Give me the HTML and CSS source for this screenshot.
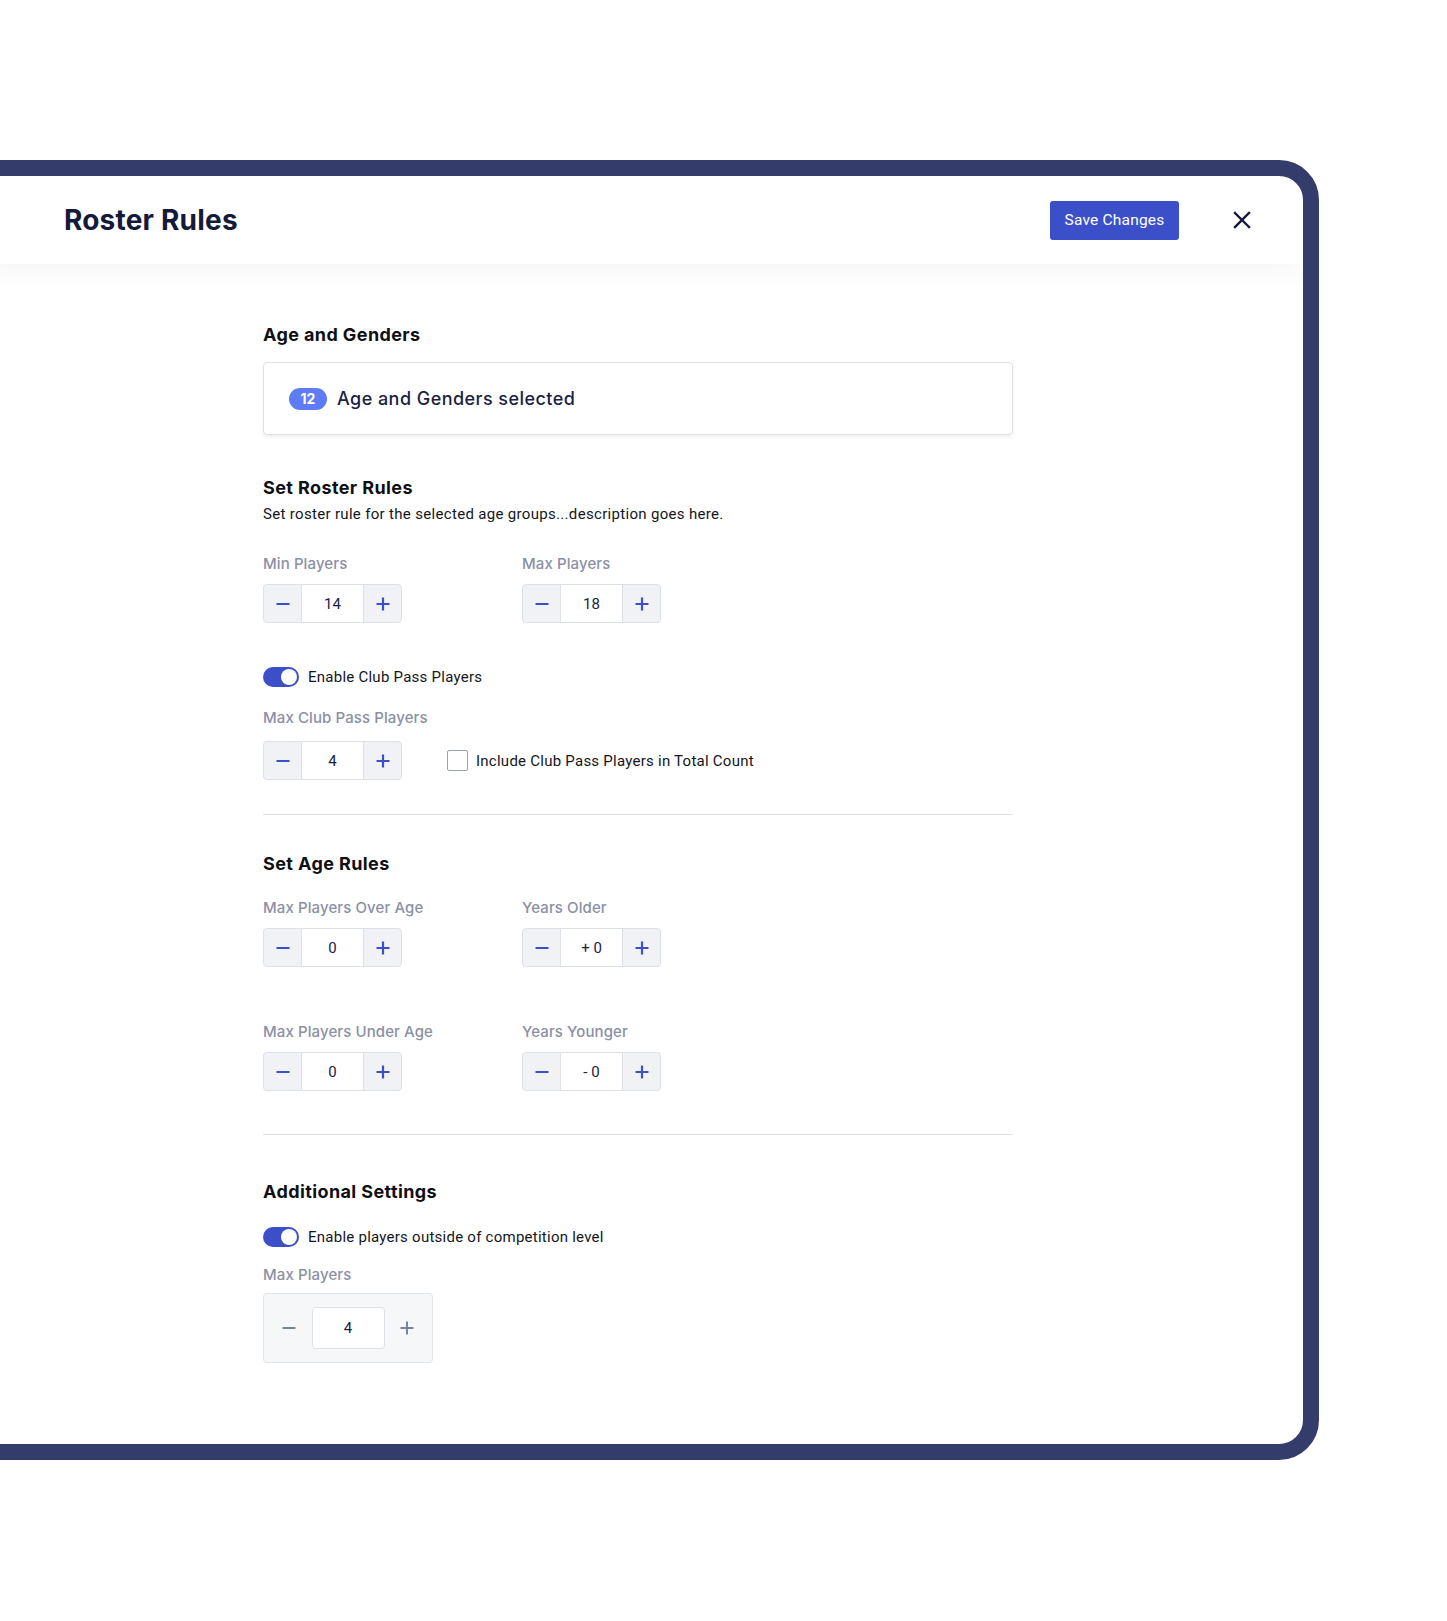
FILE: index.html
```html
<!DOCTYPE html>
<html>
<head>
  <meta name="viewport" content="width=device-width, initial-scale=1">
  <title>Roster Rules</title>
  <link rel="stylesheet" href="styles.css">
</head>
<body>
  <div class="frame">
    <header class="modal-head">
      <h1>Roster Rules</h1>
      <div class="head-actions">
        <button class="btn-save">Save Changes</button>
        <button class="btn-close" aria-label="Close">
          <svg width="18" height="18" viewBox="0 0 18 18"><path d="M2 2L16 16M16 2L2 16" stroke="#141a3a" stroke-width="2.4" stroke-linecap="square"/></svg>
        </button>
      </div>
    </header>

    <main class="modal-body">
      <h2>Age and Genders</h2>
      <div class="selected-box"><span class="badge">12</span><span>Age and Genders selected</span></div>

      <h2 class="sec-roster">Set Roster Rules</h2>
      <p class="desc">Set roster rule for the selected age groups...description goes here.</p>

      <div class="field-row row-minmax">
        <div class="field">
          <span class="field-label">Min Players</span>
          <div class="stepper">
            <span class="step"><svg width="14" height="14" viewBox="0 0 14 14"><path d="M0.5 7H13.5" stroke="#3b50c8" stroke-width="2.2"/></svg></span>
            <span class="value">14</span>
            <span class="step"><svg width="14" height="14" viewBox="0 0 14 14"><path d="M0.5 7H13.5M7 0.5V13.5" stroke="#3b50c8" stroke-width="2.2"/></svg></span>
          </div>
        </div>
        <div class="field">
          <span class="field-label">Max Players</span>
          <div class="stepper">
            <span class="step"><svg width="14" height="14" viewBox="0 0 14 14"><path d="M0.5 7H13.5" stroke="#3b50c8" stroke-width="2.2"/></svg></span>
            <span class="value">18</span>
            <span class="step"><svg width="14" height="14" viewBox="0 0 14 14"><path d="M0.5 7H13.5M7 0.5V13.5" stroke="#3b50c8" stroke-width="2.2"/></svg></span>
          </div>
        </div>
      </div>

      <div class="toggle-row row-clubpass"><span class="toggle"></span><span>Enable Club Pass Players</span></div>

      <span class="field-label label-clubmax">Max Club Pass Players</span>
      <div class="stepper-row">
        <div class="stepper">
          <span class="step"><svg width="14" height="14" viewBox="0 0 14 14"><path d="M0.5 7H13.5" stroke="#3b50c8" stroke-width="2.2"/></svg></span>
          <span class="value">4</span>
          <span class="step"><svg width="14" height="14" viewBox="0 0 14 14"><path d="M0.5 7H13.5M7 0.5V13.5" stroke="#3b50c8" stroke-width="2.2"/></svg></span>
        </div>
        <div class="check"><span class="check-box"></span><span>Include Club Pass Players in Total Count</span></div>
      </div>

      <hr class="divider div-1">

      <h2 class="sec-age">Set Age Rules</h2>
      <div class="field-row row-over">
        <div class="field">
          <span class="field-label">Max Players Over Age</span>
          <div class="stepper">
            <span class="step"><svg width="14" height="14" viewBox="0 0 14 14"><path d="M0.5 7H13.5" stroke="#3b50c8" stroke-width="2.2"/></svg></span>
            <span class="value">0</span>
            <span class="step"><svg width="14" height="14" viewBox="0 0 14 14"><path d="M0.5 7H13.5M7 0.5V13.5" stroke="#3b50c8" stroke-width="2.2"/></svg></span>
          </div>
        </div>
        <div class="field">
          <span class="field-label">Years Older</span>
          <div class="stepper">
            <span class="step"><svg width="14" height="14" viewBox="0 0 14 14"><path d="M0.5 7H13.5" stroke="#3b50c8" stroke-width="2.2"/></svg></span>
            <span class="value">+ 0</span>
            <span class="step"><svg width="14" height="14" viewBox="0 0 14 14"><path d="M0.5 7H13.5M7 0.5V13.5" stroke="#3b50c8" stroke-width="2.2"/></svg></span>
          </div>
        </div>
      </div>
      <div class="field-row row-under">
        <div class="field">
          <span class="field-label">Max Players Under Age</span>
          <div class="stepper">
            <span class="step"><svg width="14" height="14" viewBox="0 0 14 14"><path d="M0.5 7H13.5" stroke="#3b50c8" stroke-width="2.2"/></svg></span>
            <span class="value">0</span>
            <span class="step"><svg width="14" height="14" viewBox="0 0 14 14"><path d="M0.5 7H13.5M7 0.5V13.5" stroke="#3b50c8" stroke-width="2.2"/></svg></span>
          </div>
        </div>
        <div class="field">
          <span class="field-label">Years Younger</span>
          <div class="stepper">
            <span class="step"><svg width="14" height="14" viewBox="0 0 14 14"><path d="M0.5 7H13.5" stroke="#3b50c8" stroke-width="2.2"/></svg></span>
            <span class="value">- 0</span>
            <span class="step"><svg width="14" height="14" viewBox="0 0 14 14"><path d="M0.5 7H13.5M7 0.5V13.5" stroke="#3b50c8" stroke-width="2.2"/></svg></span>
          </div>
        </div>
      </div>

      <hr class="divider div-2">

      <h2 class="sec-extra">Additional Settings</h2>
      <div class="toggle-row row-outside"><span class="toggle"></span><span>Enable players outside of competition level</span></div>
      <span class="field-label label-extra">Max Players</span>
      <div class="stepper-lg">
        <svg width="14" height="14" viewBox="0 0 14 14"><path d="M0.5 7H13.5" stroke="#7584a3" stroke-width="2"/></svg>
        <span class="value-lg">4</span>
        <svg width="14" height="14" viewBox="0 0 14 14"><path d="M0.5 7H13.5M7 0.5V13.5" stroke="#7584a3" stroke-width="2"/></svg>
      </div>
    </main>
  </div>
</body>
</html>
```

FILE: styles.css
```css
* {box-sizing: border-box;}
body {margin: 0; padding-top: 160px; background: #fff; font-family: Roboto, "Liberation Sans", sans-serif; color: #1b2142;}

.frame {margin-left: -40px; width: 1359px; height: 1300px; border: 16px solid #333c6b; border-radius: 40px; overflow: hidden; background: #fff;}

.modal-head {height: 88px; display: flex; align-items: center; justify-content: space-between; padding: 0 52px 0 88px; box-shadow: 0 6px 24px rgba(20, 24, 50, 0.045);}
.modal-head h1 {margin: 0; font: 700 28px/34px Inter, sans-serif; letter-spacing: 0.2px; color: #141a3a;}
.head-actions {display: flex; align-items: center; gap: 54px;}
.btn-save {width: 129px; height: 39px; border: 0; border-radius: 3px; background: #3b50c8; color: #fff; font: 400 15.5px/39px Roboto, sans-serif; letter-spacing: 0.2px; padding: 0;}
.btn-close {width: 18px; height: 18px; padding: 0; border: 0; background: none; display: flex;}

.modal-body {width: 750px; margin-left: 287px; padding-top: 60px;}
h2 {margin: 0; font: 700 18px/22px Inter, sans-serif; letter-spacing: 0.4px; color: #0e1014;}

.selected-box {margin-top: 16px; height: 73px; display: flex; align-items: center; gap: 10px; padding-left: 25px; border: 1px solid #dfe1e6; border-radius: 4px; box-shadow: 0 2px 3px rgba(0, 0, 0, 0.07); font: 500 18px/22px Inter, sans-serif; letter-spacing: 0.45px; color: #1b2142;}
.badge {width: 38px; height: 22px; border-radius: 11px; background: #5e7cf6; color: #fff; font: 700 14px/22px Inter, sans-serif; letter-spacing: 0; text-align: center;}

.sec-roster {margin-top: 42px;}
.desc {margin: 5px 0 0; font-size: 15px; line-height: 20px; letter-spacing: 0.32px; color: #14161c;}

.field-row {display: grid; grid-template-columns: 259px 259px;}
.field-label {display: block; font: 500 15px/20px Inter, sans-serif; letter-spacing: 0.1px; color: #8b90a5;}
.field .stepper {margin-top: 10px;}
.row-minmax {margin-top: 30px;}
.row-over {margin-top: 23px;}
.row-under {margin-top: 55px;}

.stepper {display: flex; width: 139px; height: 39px; border: 1px solid #dde0e6; border-radius: 4px; overflow: hidden; background: #f1f2f5;}
.stepper .step {width: 37px; display: flex; align-items: center; justify-content: center;}
.stepper .value {width: 63px; display: flex; align-items: center; justify-content: center; background: #fff; border-left: 1px solid #dde0e6; border-right: 1px solid #dde0e6; font-size: 15px; color: #1b2142;}

.toggle-row {display: flex; align-items: center; gap: 9px; font-size: 15px; line-height: 20px; letter-spacing: 0.25px; color: #14161c;}
.toggle {position: relative; width: 36px; height: 20px; border-radius: 10px; background: #3b50c8;}
.toggle:after {content: ""; position: absolute; top: 2px; right: 2px; width: 16px; height: 16px; border-radius: 50%; background: #fff;}
.row-clubpass {margin-top: 44px;}
.label-clubmax {margin-top: 21px;}

.stepper-row {margin-top: 13px; display: flex; align-items: center; gap: 45px;}
.check {display: flex; align-items: center; gap: 8px; font-size: 15px; letter-spacing: 0.25px; color: #14161c;}
.check-box {width: 21px; height: 21px; border: 1.5px solid #9aa1ae; border-radius: 2px; background: #fff;}

.divider {margin: 0; border: 0; border-top: 1px solid #dfe1e6;}
.div-1 {margin-top: 34px;}
.sec-age {margin-top: 38px;}
.div-2 {margin-top: 43px;}
.sec-extra {margin-top: 46px;}
.row-outside {margin-top: 24px;}
.label-extra {margin-top: 18px;}

.stepper-lg {margin-top: 8px; width: 170px; height: 70px; display: flex; align-items: center; justify-content: space-between; padding: 0 18px; background: #f6f7f9; border: 1px solid #e0e3e8; border-radius: 4px;}
.value-lg {width: 73px; height: 42px; display: flex; align-items: center; justify-content: center; background: #fff; border: 1px solid #dfe2e8; border-radius: 4px; font-size: 15px; color: #1b2142;}
```
